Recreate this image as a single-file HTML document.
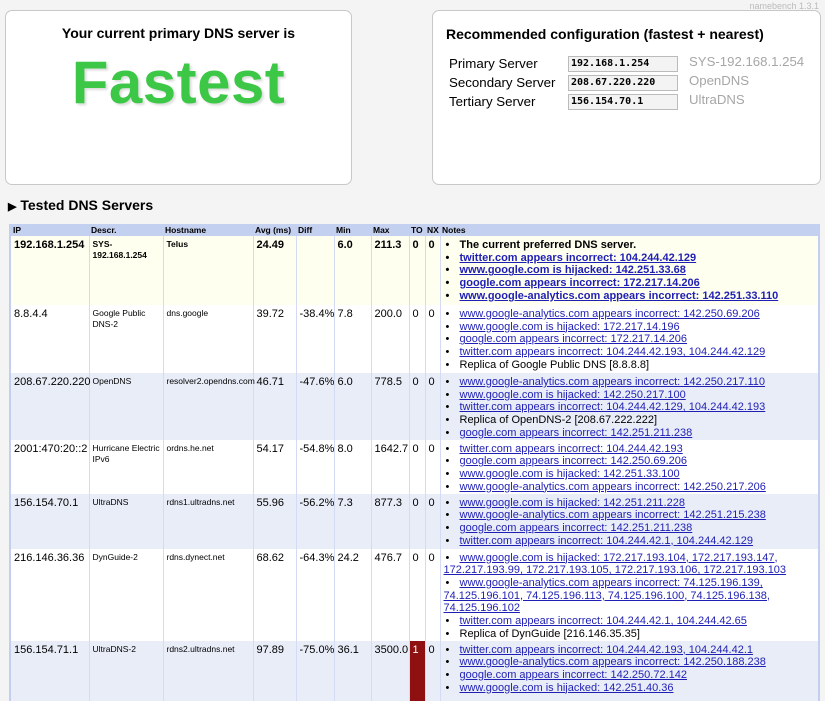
<!DOCTYPE html>
<html><head><meta charset="utf-8"><style>
*{box-sizing:border-box}
body{margin:0;width:825px;height:691px;overflow:hidden;background:#f4f4f4;font-family:"Liberation Sans",Arial,sans-serif;color:#000;position:relative}
.box{position:absolute;background:#fff;border:1px solid #c8c8c8;border-radius:7px}
#b1{left:5px;top:10px;width:347px;height:175px}
#b2{left:432px;top:10px;width:389px;height:175px}
.h1{position:absolute;top:14px;left:0;width:100%;text-align:center;font-weight:bold;font-size:14px}
.fast{position:absolute;top:37px;left:0;width:100%;text-align:center;font-weight:bold;font-size:60px;color:#3cc846;text-shadow:2px 2px 2px #ddd;letter-spacing:0.5px}
.h2{position:absolute;top:15px;left:13px;font-weight:bold;font-size:14px}
.lbl{position:absolute;left:16px;font-size:13.3px}
.inp{position:absolute;left:135px;width:110px;height:16px;border:1px solid #bbb;background:#f3f3f3;font-family:"DejaVu Sans Mono","Liberation Mono",monospace;font-weight:bold;font-size:10px;line-height:14px;padding-left:2px}
.nm{position:absolute;left:256px;font-size:13.2px;color:#a6a6a6}
.ver{position:absolute;right:6px;top:1px;font-size:9px;color:#bbb}
.tt{position:absolute;left:8px;top:197px;font-weight:bold;font-size:14px}
.tt span{font-size:11px}
table{position:absolute;left:9px;top:224px;width:811px;border-collapse:collapse;table-layout:fixed;font-size:11px;border-left:2px solid #c3cfee;border-right:2px solid #c3cfee}
th{background:#c4d0ef;font-size:8.5px;text-align:left;height:12px;padding:0 2px;font-weight:bold}
td{vertical-align:top;padding:3px 2px 0 3px;border-left:1px solid #d3dcf2;white-space:nowrap}
td:last-child{white-space:normal}
td:first-child{border-left:none}
tr.w td{background:#fff}
tr.b td{background:#e9edf8}
tr.y td{background:#fffff0;font-weight:bold}
td.s{font-size:8.5px;line-height:11px;white-space:normal}
ul{margin:0;padding:0;list-style:none}
li{line-height:12.7px;font-size:11px}
li:before{content:"•";display:inline-block;width:14px;padding-left:2px;color:#000;text-decoration:none}
a{color:#1f1fb4;text-decoration:underline}
td.red{background:#8f1010!important;color:#fff}
</style></head><body>
<div class="ver">namebench 1.3.1</div>
<div class="box" id="b1"><div class="h1">Your current primary DNS server is</div><div class="fast">Fastest</div></div>
<div class="box" id="b2"><div class="h2">Recommended configuration (fastest + nearest)</div>
<div class="lbl" style="top:45px">Primary Server</div><div class="inp" style="top:45px">192.168.1.254</div><div class="nm" style="top:43px">SYS-192.168.1.254</div>
<div class="lbl" style="top:64px">Secondary Server</div><div class="inp" style="top:64px">208.67.220.220</div><div class="nm" style="top:62px">OpenDNS</div>
<div class="lbl" style="top:83px">Tertiary Server</div><div class="inp" style="top:83px">156.154.70.1</div><div class="nm" style="top:81px">UltraDNS</div>
</div>
<div class="tt"><span>&#9654;</span> Tested DNS Servers</div>
<table>
<colgroup><col style="width:79px"><col style="width:74px"><col style="width:90px"><col style="width:43px"><col style="width:38px"><col style="width:37px"><col style="width:38px"><col style="width:16px"><col style="width:15px"><col></colgroup>
<tr><th>IP</th><th>Descr.</th><th>Hostname</th><th>Avg (ms)</th><th>Diff</th><th>Min</th><th>Max</th><th>TO</th><th>NX</th><th>Notes</th></tr>
<tr class="y" style="height:69px"><td>192.168.1.254</td><td class="s">SYS-192.168.1.254</td><td class="s">Telus</td><td>24.49</td><td></td><td>6.0</td><td>211.3</td><td>0</td><td>0</td><td><ul><li>The current preferred DNS server.</li><li><a>twitter.com appears incorrect: 104.244.42.129</a></li><li><a>www.google.com is hijacked: 142.251.33.68</a></li><li><a>google.com appears incorrect: 172.217.14.206</a></li><li><a>www.google-analytics.com appears incorrect: 142.251.33.110</a></li></ul></td></tr>
<tr class="w" style="height:68px"><td>8.8.4.4</td><td class="s">Google Public DNS-2</td><td class="s">dns.google</td><td>39.72</td><td>-38.4%</td><td>7.8</td><td>200.0</td><td>0</td><td>0</td><td><ul><li><a>www.google-analytics.com appears incorrect: 142.250.69.206</a></li><li><a>www.google.com is hijacked: 172.217.14.196</a></li><li><a>google.com appears incorrect: 172.217.14.206</a></li><li><a>twitter.com appears incorrect: 104.244.42.193, 104.244.42.129</a></li><li>Replica of Google Public DNS [8.8.8.8]</li></ul></td></tr>
<tr class="b" style="height:66px"><td>208.67.220.220</td><td class="s">OpenDNS</td><td class="s">resolver2.opendns.com</td><td>46.71</td><td>-47.6%</td><td>6.0</td><td>778.5</td><td>0</td><td>0</td><td><ul><li><a>www.google-analytics.com appears incorrect: 142.250.217.110</a></li><li><a>www.google.com is hijacked: 142.250.217.100</a></li><li><a>twitter.com appears incorrect: 104.244.42.129, 104.244.42.193</a></li><li>Replica of OpenDNS-2 [208.67.222.222]</li><li><a>google.com appears incorrect: 142.251.211.238</a></li></ul></td></tr>
<tr class="w" style="height:54px"><td>2001:470:20::2</td><td class="s">Hurricane Electric IPv6</td><td class="s">ordns.he.net</td><td>54.17</td><td>-54.8%</td><td>8.0</td><td>1642.7</td><td>0</td><td>0</td><td><ul><li><a>twitter.com appears incorrect: 104.244.42.193</a></li><li><a>google.com appears incorrect: 142.250.69.206</a></li><li><a>www.google.com is hijacked: 142.251.33.100</a></li><li><a>www.google-analytics.com appears incorrect: 142.250.217.206</a></li></ul></td></tr>
<tr class="b" style="height:55px"><td>156.154.70.1</td><td class="s">UltraDNS</td><td class="s">rdns1.ultradns.net</td><td>55.96</td><td>-56.2%</td><td>7.3</td><td>877.3</td><td>0</td><td>0</td><td><ul><li><a>www.google.com is hijacked: 142.251.211.228</a></li><li><a>www.google-analytics.com appears incorrect: 142.251.215.238</a></li><li><a>google.com appears incorrect: 142.251.211.238</a></li><li><a>twitter.com appears incorrect: 104.244.42.1, 104.244.42.129</a></li></ul></td></tr>
<tr class="w" style="height:92px"><td>216.146.36.36</td><td class="s">DynGuide-2</td><td class="s">rdns.dynect.net</td><td>68.62</td><td>-64.3%</td><td>24.2</td><td>476.7</td><td>0</td><td>0</td><td><ul><li><a>www.google.com is hijacked: 172.217.193.104, 172.217.193.147, 172.217.193.99, 172.217.193.105, 172.217.193.106, 172.217.193.103</a></li><li><a>www.google-analytics.com appears incorrect: 74.125.196.139, 74.125.196.101, 74.125.196.113, 74.125.196.100, 74.125.196.138, 74.125.196.102</a></li><li><a>twitter.com appears incorrect: 104.244.42.1, 104.244.42.65</a></li><li>Replica of DynGuide [216.146.35.35]</li></ul></td></tr>
<tr class="b" style="height:60px"><td>156.154.71.1</td><td class="s">UltraDNS-2</td><td class="s">rdns2.ultradns.net</td><td>97.89</td><td>-75.0%</td><td>36.1</td><td>3500.0</td><td class="red">1</td><td>0</td><td><ul><li><a>twitter.com appears incorrect: 104.244.42.193, 104.244.42.1</a></li><li><a>www.google-analytics.com appears incorrect: 142.250.188.238</a></li><li><a>google.com appears incorrect: 142.250.72.142</a></li><li><a>www.google.com is hijacked: 142.251.40.36</a></li></ul></td></tr>
</table>
</body></html>
